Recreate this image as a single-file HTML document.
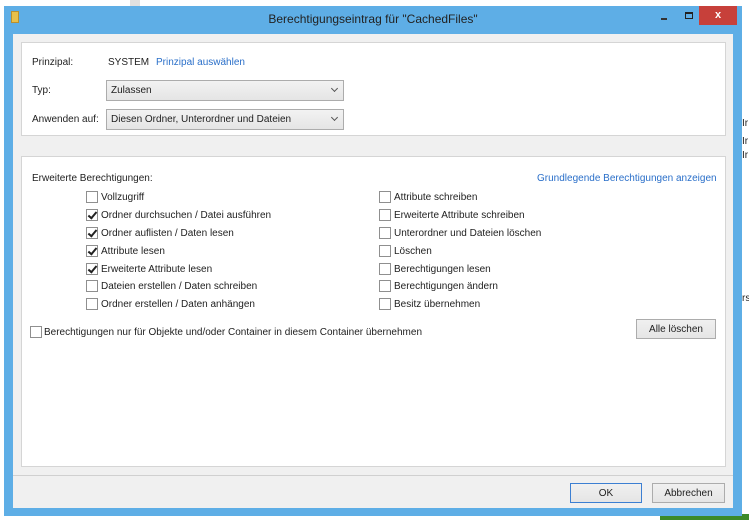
<!DOCTYPE html>
<html><head><meta charset="utf-8"><style>
*{margin:0;padding:0;box-sizing:border-box}
body{width:749px;height:520px;position:relative;overflow:hidden;background:#fff;font-family:"Liberation Sans",sans-serif;font-size:10px;color:#1e1e1e}
.a{position:absolute;white-space:nowrap}
.win{position:absolute;left:4px;top:6px;width:738px;height:510px;background:#5eaee6}
.client{position:absolute;left:9px;top:28px;width:720px;height:474px;background:#f0f0f0}
.panel{position:absolute;background:#fff;border:1px solid #d5d5d5}
.cb{position:absolute;width:12px;height:12px;border:1px solid #8f8f8f;background:#fff}
.cb.c::after{content:"";position:absolute;left:3px;top:0px;width:3px;height:7px;border:solid #222;border-width:0 2px 2px 0;transform:rotate(40deg)}
.combo{position:absolute;left:106px;width:238px;height:21px;border:1px solid #acacac;background:linear-gradient(#f2f2f2,#e5e5e5)}
.combo span{position:absolute;left:4px;top:4px}
.combo i{position:absolute;right:6px;top:5px;width:5px;height:5px;border:solid #555;border-width:0 1.5px 1.5px 0;transform:rotate(45deg)}
.btn{position:absolute;height:20px;border:1px solid #acacac;background:linear-gradient(#f0f0f0,#e5e5e5);display:flex;align-items:center;justify-content:center}
.link{color:#2a6fc9}
</style></head><body>
<div class="a" style="left:130px;top:0;width:10px;height:6px;background:#e0e0e0"></div>
<div class="a" style="left:660px;top:514px;width:89px;height:6px;background:#3c8a2a"></div>
<div class="a" style="left:742px;top:118px">Ir</div>
<div class="a" style="left:742px;top:136px">Ir</div>
<div class="a" style="left:742px;top:150px">Ir</div>
<div class="a" style="left:742px;top:293px">rs</div>
<div class="win">
 <div class="a" style="left:7px;top:5px;width:8px;height:12px;background:#e8c04a;border:1px solid #b89030"></div>
 <div class="a" style="left:0;width:738px;top:6px;text-align:center;font-size:12px;color:#222">Berechtigungseintrag für "CachedFiles"</div>
 <div class="a" style="left:657px;top:12px;width:6px;height:1.5px;background:#333"></div>
 <div class="a" style="left:681px;top:6px;width:8px;height:7px;border:1px solid #222;border-top-width:2px"></div>
 <div class="a" style="left:695px;top:0;width:38px;height:19px;background:#c7403a;color:#fff;text-align:center;font-size:11px;font-weight:bold;line-height:18px">x</div>
 <div class="client">
  <div class="panel" style="left:8px;top:8px;width:705px;height:94px">
   <div class="a" style="left:10px;top:14px">Prinzipal:</div>
   <div class="a" style="left:86px;top:14px">SYSTEM</div>
   <div class="a link" style="left:134px;top:14px">Prinzipal auswählen</div>
   <div class="a" style="left:10px;top:42px">Typ:</div>
   <div class="a" style="left:10px;top:71px">Anwenden auf:</div>
  </div>
  <div class="combo" style="left:93px;top:46px"><span>Zulassen</span><i></i></div>
  <div class="combo" style="left:93px;top:75px"><span>Diesen Ordner, Unterordner und Dateien</span><i></i></div>
  <div class="panel" style="left:8px;top:122px;width:705px;height:311px"></div>
 </div>
</div>
<div class="a" style="left:32px;top:173px">Erweiterte Berechtigungen:</div>
<div class="a link" style="left:537px;top:173px">Grundlegende Berechtigungen anzeigen</div>

<div class="cb" style="left:86px;top:191px"></div><div class="a" style="left:101px;top:192px">Vollzugriff</div>
<div class="cb c" style="left:86px;top:209px"></div><div class="a" style="left:101px;top:210px">Ordner durchsuchen / Datei ausführen</div>
<div class="cb c" style="left:86px;top:227px"></div><div class="a" style="left:101px;top:228px">Ordner auflisten / Daten lesen</div>
<div class="cb c" style="left:86px;top:245px"></div><div class="a" style="left:101px;top:246px">Attribute lesen</div>
<div class="cb c" style="left:86px;top:263px"></div><div class="a" style="left:101px;top:264px">Erweiterte Attribute lesen</div>
<div class="cb" style="left:86px;top:280px"></div><div class="a" style="left:101px;top:281px">Dateien erstellen / Daten schreiben</div>
<div class="cb" style="left:86px;top:298px"></div><div class="a" style="left:101px;top:299px">Ordner erstellen / Daten anhängen</div>

<div class="cb" style="left:379px;top:191px"></div><div class="a" style="left:394px;top:192px">Attribute schreiben</div>
<div class="cb" style="left:379px;top:209px"></div><div class="a" style="left:394px;top:210px">Erweiterte Attribute schreiben</div>
<div class="cb" style="left:379px;top:227px"></div><div class="a" style="left:394px;top:228px">Unterordner und Dateien löschen</div>
<div class="cb" style="left:379px;top:245px"></div><div class="a" style="left:394px;top:246px">Löschen</div>
<div class="cb" style="left:379px;top:263px"></div><div class="a" style="left:394px;top:264px">Berechtigungen lesen</div>
<div class="cb" style="left:379px;top:280px"></div><div class="a" style="left:394px;top:281px">Berechtigungen ändern</div>
<div class="cb" style="left:379px;top:298px"></div><div class="a" style="left:394px;top:299px">Besitz übernehmen</div>

<div class="cb" style="left:30px;top:326px"></div><div class="a" style="left:44px;top:327px">Berechtigungen nur für Objekte und/oder Container in diesem Container übernehmen</div>
<div class="btn" style="left:636px;top:319px;width:80px">Alle löschen</div>

<div class="a" style="left:13px;top:475px;width:720px;height:1px;background:#d0d0d0"></div>
<div class="btn" style="left:570px;top:483px;width:72px;border-color:#3c7fd2">OK</div>
<div class="btn" style="left:652px;top:483px;width:73px">Abbrechen</div>
</body></html>
